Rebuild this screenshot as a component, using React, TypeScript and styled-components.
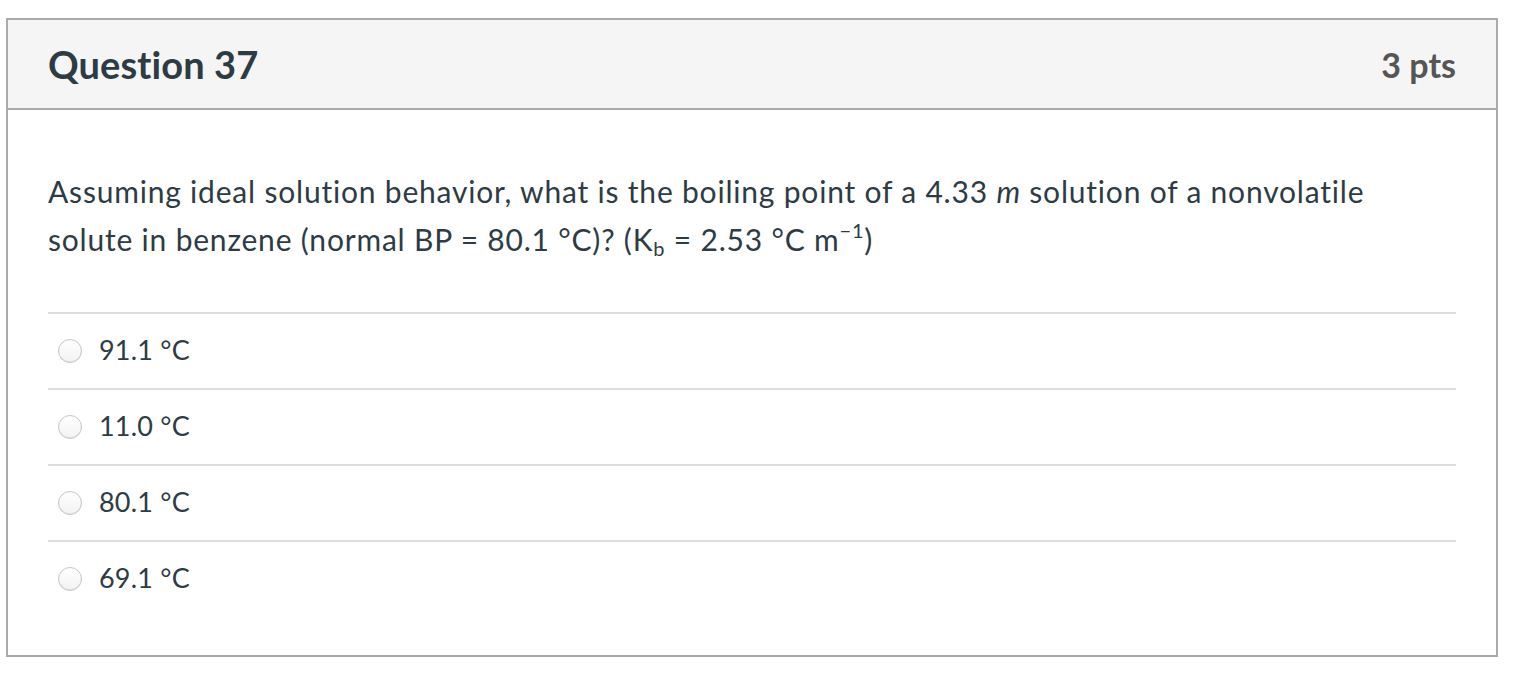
import styled, { createGlobalStyle } from 'styled-components';

const GlobalStyle = createGlobalStyle`
    body {
        margin: 0;
        background: #fff;
        font-family: Lato, 'Helvetica Neue', Arial, sans-serif;
        color: #2d3b45;
    }
`;

const Page = styled.div`
    padding: 18px 0 0 6px;
`;

const Card = styled.div`
    width: 1492px;
    box-sizing: border-box;
    border: 2px solid #aaaaaa;
`;

const Header = styled.div`
    display: flex;
    align-items: center;
    justify-content: space-between;
    height: 88px;
    padding: 0 40px;
    background: #f5f5f5;
    border-bottom: 2px solid #aaaaaa;
`;

const Title = styled.h2`
    margin: 0;
    font-size: 38px;
    font-weight: 700;
    letter-spacing: 0.1px;
    color: #2d3b45;
`;

const Points = styled.span`
    font-size: 34px;
    font-weight: 700;
    color: #555555;
`;

const Body = styled.div`
    padding: 57px 40px 39px 40px;
`;

const Prompt = styled.p`
    margin: 0 0 49px 0;
    max-width: 1380px;
    font-size: 30px;
    line-height: 48px;
    letter-spacing: 0.8px;
`;

const Sub = styled.sub`
    font-size: 20px;
    line-height: 0;
    vertical-align: -5px;
`;

const Sup = styled.sup`
    font-size: 20px;
    line-height: 0;
    vertical-align: 13px;
`;

const Answers = styled.div`
    display: flex;
    flex-direction: column;
`;

const Answer = styled.label`
    display: flex;
    align-items: center;
    gap: 17px;
    box-sizing: border-box;
    height: 76px;
    padding: 0 0 3px 10px;
    border-top: 2px solid #dddddd;
    font-size: 27px;
    letter-spacing: 0.2px;
`;

const Radio = styled.span`
    width: 22px;
    height: 22px;
    margin-top: 3px;
    border-radius: 50%;
    border: 1px solid #c4c4c4;
    background: linear-gradient(#ffffff, #f2f2f2);
    box-shadow: inset 0 -1px 1px rgba(0, 0, 0, 0.06);
    flex: none;
`;

const answers = ['91.1 °C', '11.0 °C', '80.1 °C', '69.1 °C'];

export default function App() {
    return (
        <Page>
            <GlobalStyle />
            <Card>
                <Header>
                    <Title>Question 37</Title>
                    <Points>3 pts</Points>
                </Header>
                <Body>
                    <Prompt>
                        Assuming ideal solution behavior, what is the boiling point of a 4.33 <i>m</i> solution of a nonvolatile
                        solute in benzene (normal BP = 80.1 °C)? (K<Sub>b</Sub> = 2.53 °C m<Sup>−1</Sup>)
                    </Prompt>
                    <Answers>
                        {answers.map((a) => (
                            <Answer key={a}>
                                <Radio />
                                {a}
                            </Answer>
                        ))}
                    </Answers>
                </Body>
            </Card>
        </Page>
    );
}
